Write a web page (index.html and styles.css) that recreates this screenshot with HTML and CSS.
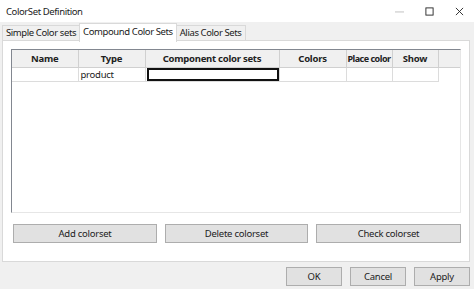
FILE: index.html
```html
<!DOCTYPE html>
<html lang="en">
<head>
<meta charset="UTF-8" />
<title>ColorSet Definition</title>
<link rel="stylesheet" href="styles.css">
</head>
<body>
  <div class="window">
    <div class="titlebar">
      <span class="title">ColorSet Definition</span>
      <div class="caption-buttons">
        <span class="cap cap-min"><svg viewBox="0 0 10 10"><line x1="0" y1="5.5" x2="10" y2="5.5"/></svg></span>
        <span class="cap cap-max"><svg viewBox="0 0 10 10"><rect x="1" y="1" width="8" height="8"/></svg></span>
        <span class="cap cap-close"><svg viewBox="0 0 10 10"><line x1="1" y1="1" x2="9" y2="9"/><line x1="9" y1="1" x2="1" y2="9"/></svg></span>
      </div>
    </div>

    <div class="tabs">
      <div class="tab">Simple Color sets</div>
      <div class="tab active">Compound Color Sets</div>
      <div class="tab">Alias Color Sets</div>
    </div>

    <div class="panel">
      <div class="grid">
        <table>
          <colgroup>
            <col class="c-name">
            <col class="c-type">
            <col class="c-comp">
            <col class="c-colors">
            <col class="c-place">
            <col class="c-show">
            <col>
          </colgroup>
          <thead>
            <tr>
              <th>Name</th>
              <th>Type</th>
              <th>Component color sets</th>
              <th>Colors</th>
              <th class="place">Place color</th>
              <th>Show</th>
              <th class="fill"></th>
            </tr>
          </thead>
          <tbody>
            <tr>
              <td></td>
              <td>product</td>
              <td class="editing"><div class="editor"></div></td>
              <td></td>
              <td></td>
              <td></td>
              <td class="fill"></td>
            </tr>
          </tbody>
        </table>
      </div>

      <div class="actions">
        <button class="btn">Add colorset</button>
        <button class="btn">Delete colorset</button>
        <button class="btn">Check colorset</button>
      </div>
    </div>

    <div class="footer">
      <button class="btn btn-dialog">OK</button>
      <button class="btn btn-dialog">Cancel</button>
      <button class="btn btn-dialog">Apply</button>
    </div>
  </div>
</body>
</html>
```

FILE: styles.css
```css
html, body {
  margin: 0;
  padding: 0;
  width: 474px;
  height: 289px;
  overflow: hidden;
  font-family: 'Noto Sans', 'Open Sans', sans-serif;
  font-size: 9.5px;
  letter-spacing: -0.25px;
  color: #1a1a1a;
  background: #f0f0f0;
}
.window {
  display: flex;
  flex-direction: column;
  height: 289px;
}
.titlebar {
  height: 22px;
  background: #fff;
  display: flex;
  align-items: center;
  justify-content: space-between;
  padding-left: 6px;
}
.title {
  color: #222;
  letter-spacing: -0.4px;
}
.caption-buttons {
  display: flex;
  height: 100%;
}
.cap {
  width: 30px;
  display: flex;
  align-items: center;
  justify-content: center;
}
.cap svg {
  width: 9px;
  height: 9px;
  fill: none;
  stroke: #222;
  stroke-width: 1;
}
.cap-min svg {
  stroke: #bbb;
}
.tabs {
  display: flex;
  padding: 3px 0 0 2px;
  height: 15px;
  position: relative;
  z-index: 2;
  letter-spacing: -0.4px;
}
.tab {
  height: 15px;
  line-height: 14px;
  padding: 0 3px;
  border: 1px solid #d9d9d9;
  border-bottom: none;
  background: #f0f0f0;
  box-sizing: border-box;
  margin-right: -1px;
}
.tab.active {
  height: 19px;
  margin-top: -2px;
  line-height: 16px;
  background: #fff;
  padding: 0 3px;
}
.panel {
  height: 222px;
  box-sizing: border-box;
  margin: 0 4px 0 2px;
  background: #fff;
  border: 1px solid #d9d9d9;
  padding: 8px 8px 0 8px;
  display: flex;
  flex-direction: column;
  gap: 11px;
}
.grid {
  height: 164px;
  box-sizing: border-box;
  border: 1px solid #828790;
  border-right-color: #e6e6e6;
  border-bottom-color: #e6e6e6;
  overflow: hidden;
}
table {
  border-collapse: collapse;
  width: 100%;
  table-layout: fixed;
}
col.c-name { width: 66px; }
col.c-type { width: 67px; }
col.c-comp { width: 134px; }
col.c-colors { width: 67px; }
col.c-place { width: 46px; }
col.c-show { width: 46px; }
th {
  height: 17px;
  padding: 0;
  background: #f0f0f0;
  font-weight: bold;
  color: #222;
  border-right: 1px solid #d0d0d0;
  border-bottom: 1px solid #d0d0d0;
  white-space: nowrap;
  overflow: hidden;
}
th.place {
  font-size: 9px;
  letter-spacing: -0.5px;
}
td {
  height: 13px;
  padding: 0 2px;
  border-right: 1px solid #dcdcdc;
  border-bottom: 1px solid #dcdcdc;
  line-height: 13px;
}
th.fill, td.fill {
  border-right: none;
}
td.fill {
  border-bottom: none;
}
td.editing {
  padding: 0;
}
.editor {
  height: 13px;
  box-sizing: border-box;
  border: 2px solid #111;
  margin: 0 0 0 1px;
}
.actions {
  display: grid;
  grid-template-columns: 144px 143px 145px;
  gap: 8px;
  padding-left: 2px;
}
.btn {
  height: 19px;
  box-sizing: border-box;
  background: #e1e1e1;
  border: 1px solid #adadad;
  font-family: 'Noto Sans', 'Open Sans', sans-serif;
  font-size: 9.5px;
  letter-spacing: -0.25px;
  color: #222;
  padding: 0;
}
.footer {
  display: flex;
  justify-content: flex-end;
  gap: 8px;
  padding: 5px 4px 0 0;
}
.btn-dialog {
  width: 56px;
  height: 19px;
}
```
